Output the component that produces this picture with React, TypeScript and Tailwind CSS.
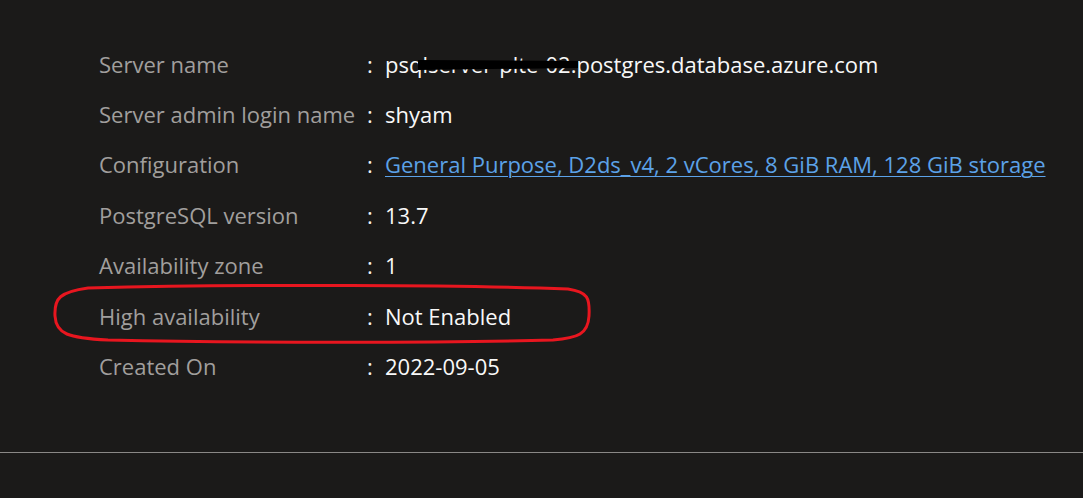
import React from "react";

type Row = { label: string; value: string; link?: boolean };

const rows: Row[] = [
  { label: "Server name", value: "psqlserver-plte-02.postgres.database.azure.com" },
  { label: "Server admin login name", value: "shyam" },
  {
    label: "Configuration",
    value: "General Purpose, D2ds_v4, 2 vCores, 8 GiB RAM, 128 GiB storage",
    link: true,
  },
  { label: "PostgreSQL version", value: "13.7" },
  { label: "Availability zone", value: "1" },
  { label: "High availability", value: "Not Enabled" },
  { label: "Created On", value: "2022-09-05" },
];

export default function App() {
  return (
    <div
      className="relative h-[498px] w-[1083px] overflow-hidden bg-[#1b1a19]"
      style={{ fontFamily: '"Open Sans", "Noto Sans", sans-serif' }}
    >
      <div className="flex flex-col pl-[99px] pt-[39px]">
        {rows.map((r) => (
          <div key={r.label} className="flex h-[50.4px] items-center text-[22px]">
            <div className="w-[268px] text-[#a19f9d]">{r.label}</div>
            <div className="w-[18px] text-[#f3f2f1]">:</div>
            {r.link ? (
              <a className="text-[#5ca2e8] underline underline-offset-[3px] decoration-1">{r.value}</a>
            ) : (
              <div className="text-[#f8f8f8]">{r.value}</div>
            )}
          </div>
        ))}
      </div>

      {/* bottom divider */}
      <div className="absolute left-0 right-0 top-[452px] h-px bg-[#8a8886]" />

      {/* redaction stroke */}
      <svg className="absolute left-[410px] top-[54px]" width="180" height="20" viewBox="0 0 180 20">
        <path d="M8 6 L168 7 L168 14 L8 16 Z" fill="#000" />
      </svg>

      {/* red highlight outline */}
      <svg className="absolute left-[48px] top-[280px]" width="548" height="68" viewBox="0 0 548 68">
        <path
          d="M40 8 C200 4 420 5 520 9 C540 12 542 18 541 36 C540 54 530 58 505 60 C400 63 200 63 60 60 C20 58 8 54 7 36 C6 18 12 12 40 8 Z"
          stroke="#e8161f"
          strokeWidth="3"
          fill="none"
        />
      </svg>
    </div>
  );
}
